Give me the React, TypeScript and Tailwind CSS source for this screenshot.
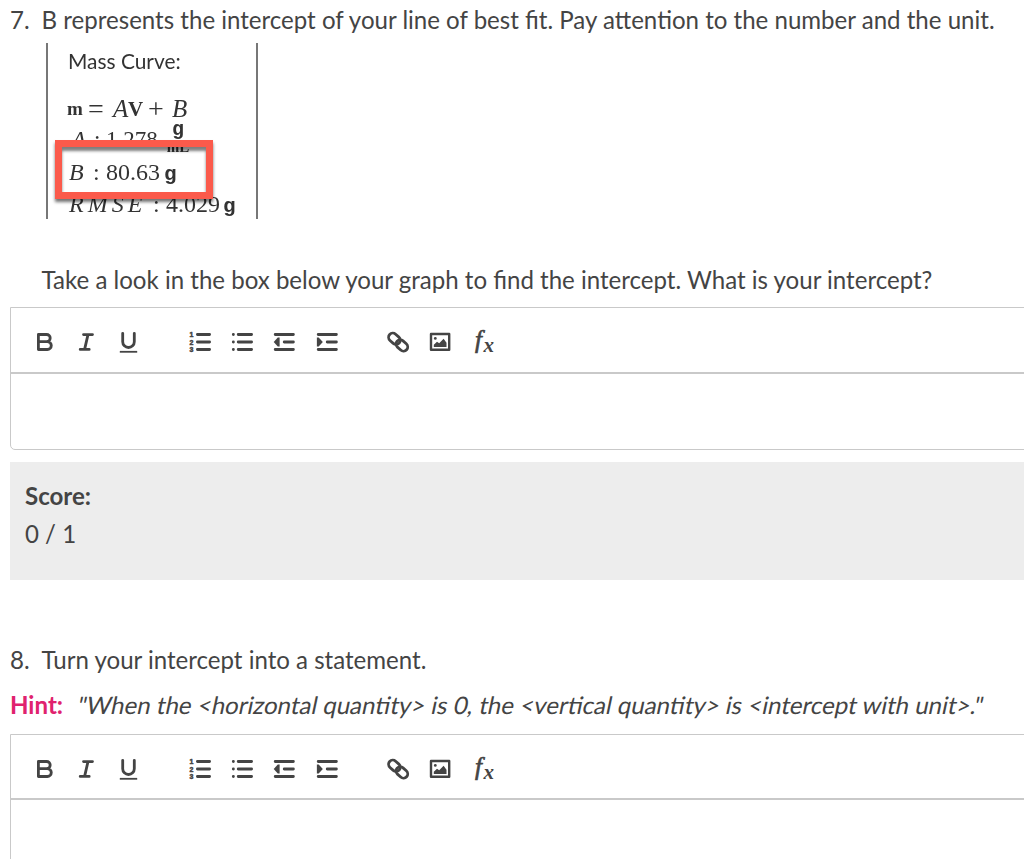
import React, { PropsWithChildren } from 'react';

const Icon: React.FC<PropsWithChildren> = ({ children }) => (
  <svg width="24" height="24" viewBox="0 0 24 24" fill="none" stroke="#444" strokeWidth="2.8" strokeLinecap="round" strokeLinejoin="round" className="overflow-visible">
    {children}
  </svg>
);

const ToolButton: React.FC<PropsWithChildren<{ label: string }>> = ({ label, children }) => (
  <button aria-label={label} className="flex h-10 w-[42.2px] shrink-0 items-center justify-center">
    <Icon>{children}</Icon>
  </button>
);

const Toolbar = () => (
  <div className="flex h-full items-center gap-[29.5px] pl-[11.8px] pt-1">
    <div className="flex">
      <ToolButton label="Bold">
        <path d="M6.4 4.5h8.2a3.6 3.6 0 0 1 0 7.2H6.4zM6.4 11.7h9a3.9 3.9 0 0 1 0 7.8h-9z" />
      </ToolButton>
      <ToolButton label="Italic">
        <path d="M9.5 4.6h9M6.2 19.4h9M14 4.6l-3.4 14.8" />
      </ToolButton>
      <ToolButton label="Underline">
        <path d="M6.7 3.3v8.4a5.8 5.8 0 0 0 11.6 0V3.3" />
        <path d="M3.8 21.8h17.4" strokeWidth="1.8" strokeLinecap="butt" />
      </ToolButton>
    </div>
    <div className="flex">
      <ToolButton label="Numbered list">
        <path d="M9.4 4.5h12.2M9.4 12h12.2M9.4 19.5h12.2" />
        <g fill="#444" stroke="#444" strokeWidth="0.5" className="font-['Liberation_Sans',sans-serif] text-[7px] font-bold">
          <text x="1.4" y="7">1</text>
          <text x="1.4" y="14.6">2</text>
          <text x="1.4" y="22.2">3</text>
        </g>
      </ToolButton>
      <ToolButton label="Bulleted list">
        <path d="M8.2 4.5h13.4M8.2 12h13.4M8.2 19.5h13.4M3.3 4.5h.1M3.3 12h.1M3.3 19.5h.1" />
      </ToolButton>
      <ToolButton label="Outdent">
        <path d="M3.2 4.5h18.2M12.2 12h9.2M3.2 19.5h18.2" />
        <path d="M7.6 7.6v8.8H5.8L1.7 12l4.1-4.4z" fill="#444" stroke="none" />
      </ToolButton>
      <ToolButton label="Indent">
        <path d="M3.2 4.5h18.2M12.2 12h9.2M3.2 19.5h18.2" />
        <path d="M1.9 7.6v8.8h1.8L7.8 12 3.7 7.6z" fill="#444" stroke="none" />
      </ToolButton>
    </div>
    <div className="flex">
      <ToolButton label="Insert link">
        <g transform="rotate(42 12 12)">
          <rect x="0.8" y="7.8" width="12.8" height="8.4" rx="4.2" />
          <rect x="10.8" y="7.8" width="12.8" height="8.4" rx="4.2" />
        </g>
      </ToolButton>
      <ToolButton label="Insert image">
        <path d="M3 4h18.2v15.8H3z" strokeWidth="2.4" />
        <path d="M5.8 16.9v-2.2l3.2-2.9 2.2 1.5 4.4-4.5 2.9 4v4.1z" fill="#444" stroke="none" />
        <circle cx="7.3" cy="8.4" r="1.4" fill="#444" stroke="none" />
      </ToolButton>
      <ToolButton label="Insert equation">
        <g fill="#444" stroke="#444" strokeWidth="0.7" className="font-['Liberation_Serif',serif] italic">
          <text x="4" y="18" fontSize="25">f</text>
          <text x="12.6" y="22.4" fontSize="21" fontWeight="700" strokeWidth="0">x</text>
        </g>
      </ToolButton>
    </div>
  </div>
);

const Unit: React.FC<PropsWithChildren> = ({ children }) => (
  <span className="inline-block pt-[3px] font-['Liberation_Mono',monospace] text-[21px] font-bold">{children}</span>
);

const MassCurve = () => (
  <div className="relative ml-9 h-44 w-[212px] border-x-2 border-[#777] pl-5 text-[#333]">
    <div className="whitespace-nowrap font-['Liberation_Serif',serif] blur-[0.4px]">
      <div className="h-[50px] pt-[1.5px] font-[Lato,sans-serif] text-[20.9px] leading-8">Mass Curve:</div>
      <div className="flex h-[32px] items-center text-[25px]">
        <span className="-ml-px w-[21px] text-[19px] font-bold">m</span>
        <span className="w-[25px] text-[28px]">=</span>
        <i className="w-[15px]">A</i>
        <span className="w-5 text-[21px] font-bold">V</span>
        <span className="w-6 text-[28px]">+</span>
        <i>B</i>
      </div>
      <div className="flex h-[30px] text-[23px] leading-[30px]">
        <i className="ml-1 w-[22px]">A</i>
        <span className="w-3">:</span>
        <span className="w-[60px]">1.278</span>
        <span className="flex w-6 flex-col items-center">
          <span className="-mt-1 h-[23px] font-['Liberation_Mono',monospace] text-[20px] font-bold leading-[18px]">g</span>
          <span className="text-[15px] font-bold leading-[17px]">mL</span>
        </span>
      </div>
      <div className="flex h-[34px] text-[24px] leading-[34px]">
        <i className="ml-px w-6">B</i>
        <span className="w-[13px]">:</span>
        <span className="w-[58px]">80.63</span>
        <Unit>g</Unit>
      </div>
      <div className="flex h-[30px] text-[24px] leading-[30px]">
        <i className="ml-px w-[84px] text-[24px] tracking-[4px]">RMSE</i>
        <span className="w-[13px]">:</span>
        <span className="w-[57px]">4.029</span>
        <Unit>g</Unit>
      </div>
    </div>
    {/* highlight drawn over the intercept */}
    <div className="absolute left-[7px] top-[97px] h-[59px] w-[158px] border-[7.5px] border-[#fb5a4b] shadow-[0_3px_3px_rgba(0,0,0,0.55),inset_0_4px_3px_rgba(0,0,0,0.5)]" />
  </div>
);

const Editor = ({ toolbarClass = 'h-[66px]' }: { toolbarClass?: string }) => (
  <div className="h-[143px] w-[1040px] rounded-b-[5px] border-[1.5px] border-[#c9c9c9]">
    <div className={`border-b-2 border-[#c9c9c9] ${toolbarClass}`}>
      <Toolbar />
    </div>
  </div>
);

const App: React.FC = () => (
  <main className="h-[859px] w-full overflow-hidden bg-white pl-2.5 pt-0.5 font-[Lato,sans-serif] text-[24.07px] leading-9 text-[#444]">
    <section>
      <div className="flex h-[41px] whitespace-nowrap">
        <span className="w-[31.6px]">7.</span>
        <p>B represents the intercept of your line of best fit. Pay attention to the number and the unit.</p>
      </div>
      <MassCurve />
      <p className="mb-[9px] ml-[31.6px] mt-[43px] whitespace-nowrap">
        Take a look in the box below your graph to find the intercept. What is your intercept?
      </p>
      <Editor />
      <div className="mt-3 h-[118px] bg-[#ededed] pl-[15px] pt-[15px] leading-[38px]">
        <div className="font-bold">Score:</div>
        <div>0 / 1</div>
      </div>
    </section>
    <section className="mt-[62px]">
      <div className="flex h-[45px] whitespace-nowrap">
        <span className="w-[31.6px]">8.</span>
        <p>Turn your intercept into a statement.</p>
      </div>
      <p className="mb-[11px] whitespace-nowrap">
        <span className="mr-[14.5px] font-bold text-[#e0226e]">Hint:</span>
        <span className="inline-block -skew-x-12">"When the &lt;horizontal quantity&gt; is 0, the &lt;vertical quantity&gt; is &lt;intercept with unit&gt;."</span>
      </p>
      <Editor toolbarClass="h-[65px]" />
    </section>
  </main>
);

export default App;
